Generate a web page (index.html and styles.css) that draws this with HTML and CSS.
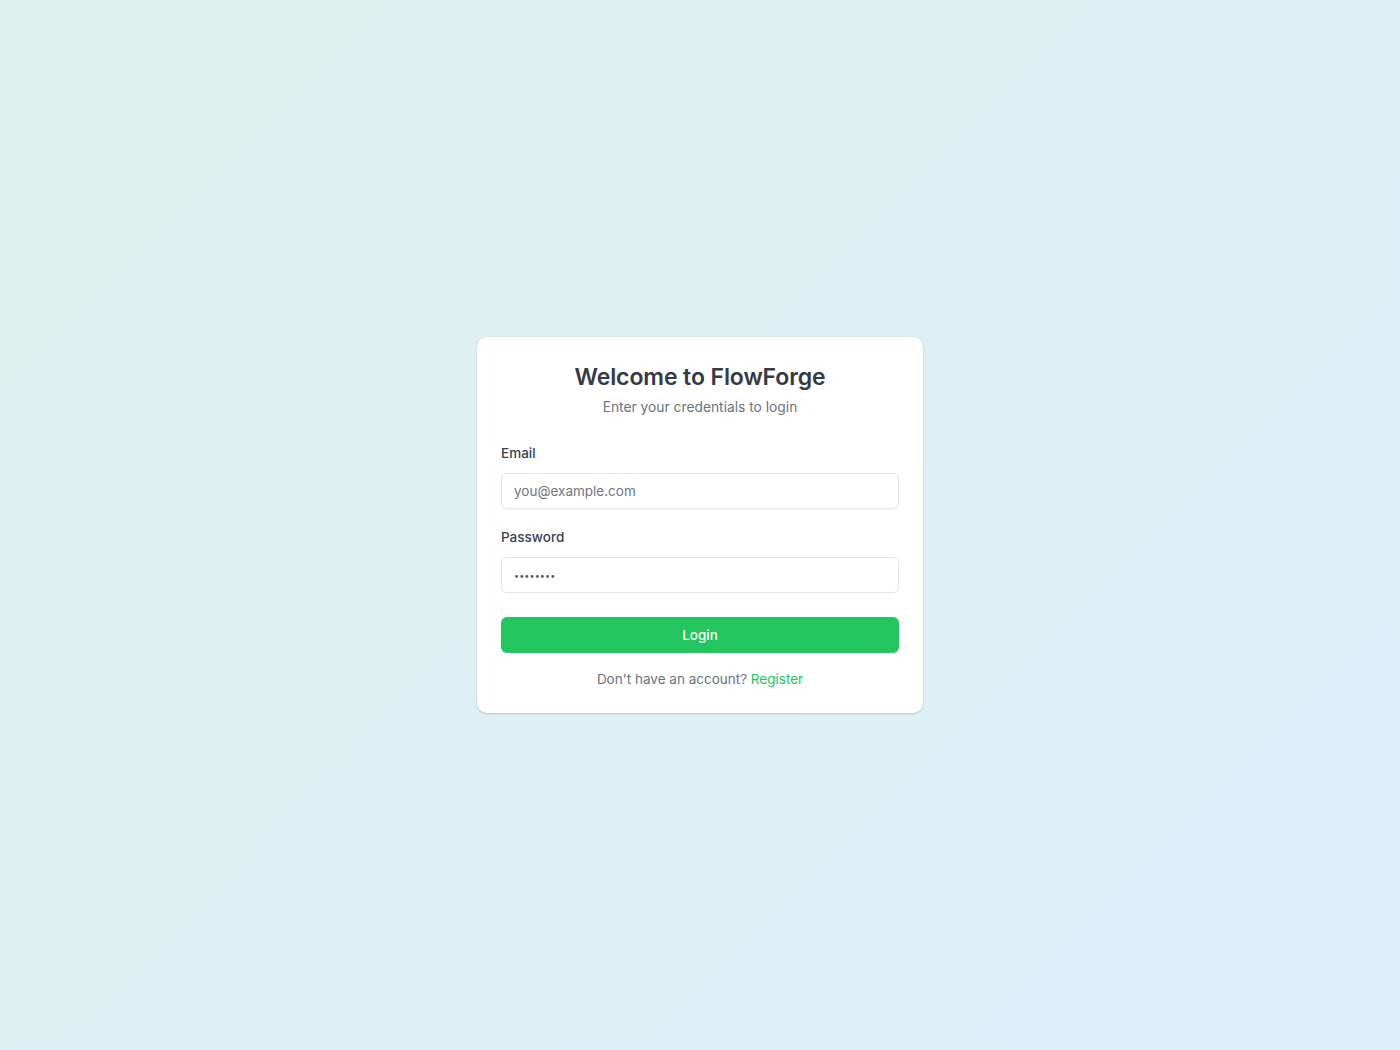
FILE: index.html
```html
<!DOCTYPE html>
<html lang="en">
<head>
<meta charset="utf-8">
<title>FlowForge Login</title>
<link rel="stylesheet" href="styles.css">
</head>
<body>
<main class="page">
  <section class="card">
    <header class="card-head">
      <h1 class="title">Welcome to FlowForge</h1>
      <p class="subtitle">Enter your credentials to login</p>
    </header>
    <form class="form">
      <label class="field">
        <span class="label">Email</span>
        <input class="input" type="email" placeholder="you@example.com">
      </label>
      <label class="field">
        <span class="label">Password</span>
        <input class="input input-pass" type="password" value="password">
      </label>
      <button class="btn" type="button">Login</button>
    </form>
    <p class="foot">Don't have an account? <a class="link" href="#">Register</a></p>
  </section>
</main>
</body>
</html>
```

FILE: styles.css
```css
* { box-sizing: border-box; }
html, body { margin: 0; padding: 0; }
body {
  font-family: Inter, "Noto Sans", "Liberation Sans", sans-serif;
  background: linear-gradient(135deg, #dcf3ed 0%, #ddf0f2 40%, #dff0fc 100%);
  min-height: 100vh;
}
.page {
  min-height: 100vh;
  display: flex;
  align-items: center;
  justify-content: center;
}
.card {
  width: 446px;
  background: #ffffff;
  border-radius: 10px;
  padding: 24px;
  box-shadow: 0 1px 3px rgba(0,0,0,0.12), 0 1px 2px rgba(0,0,0,0.06);
}
.card-head { text-align: center; }
.title {
  margin: 0;
  font-size: 23px;
  line-height: 32px;
  font-weight: 600;
  color: #343a46;
  letter-spacing: -0.1px;
}
.subtitle {
  margin: 4px 0 0;
  font-size: 13.8px;
  line-height: 20px;
  color: #6b7280;
  letter-spacing: 0;
}
.form {
  margin-top: 26px;
  display: flex;
  flex-direction: column;
}
.field { display: flex; flex-direction: column; margin-bottom: 18px; }
.field:last-of-type { margin-bottom: 24px; }
.label {
  font-size: 13.5px;
  line-height: 20px;
  font-weight: 500;
  color: #374151;
  margin-bottom: 10px;
}
.input {
  height: 36px;
  border: 1px solid #e3e5e9;
  border-radius: 6px;
  padding: 0 12px;
  font-family: inherit;
  font-size: 13.5px;
  color: #6b7280;
  background: #fff;
  box-shadow: 0 1px 1px rgba(0,0,0,0.03);
  outline: none;
}
.input::placeholder { color: #71757d; }
.input-pass { font-size: 9px; letter-spacing: 0.1px; color: #55595f; }
.btn {
  height: 36px;
  border: 0;
  border-radius: 6px;
  background: #22c55e;
  color: #fff;
  font-family: inherit;
  font-size: 13.5px;
  font-weight: 500;
  cursor: pointer;
}
.foot {
  margin: 16px 0 0;
  text-align: center;
  font-size: 13.5px;
  line-height: 20px;
  color: #6b7280;
}
.link { color: #22c55e; text-decoration: none; }
```
